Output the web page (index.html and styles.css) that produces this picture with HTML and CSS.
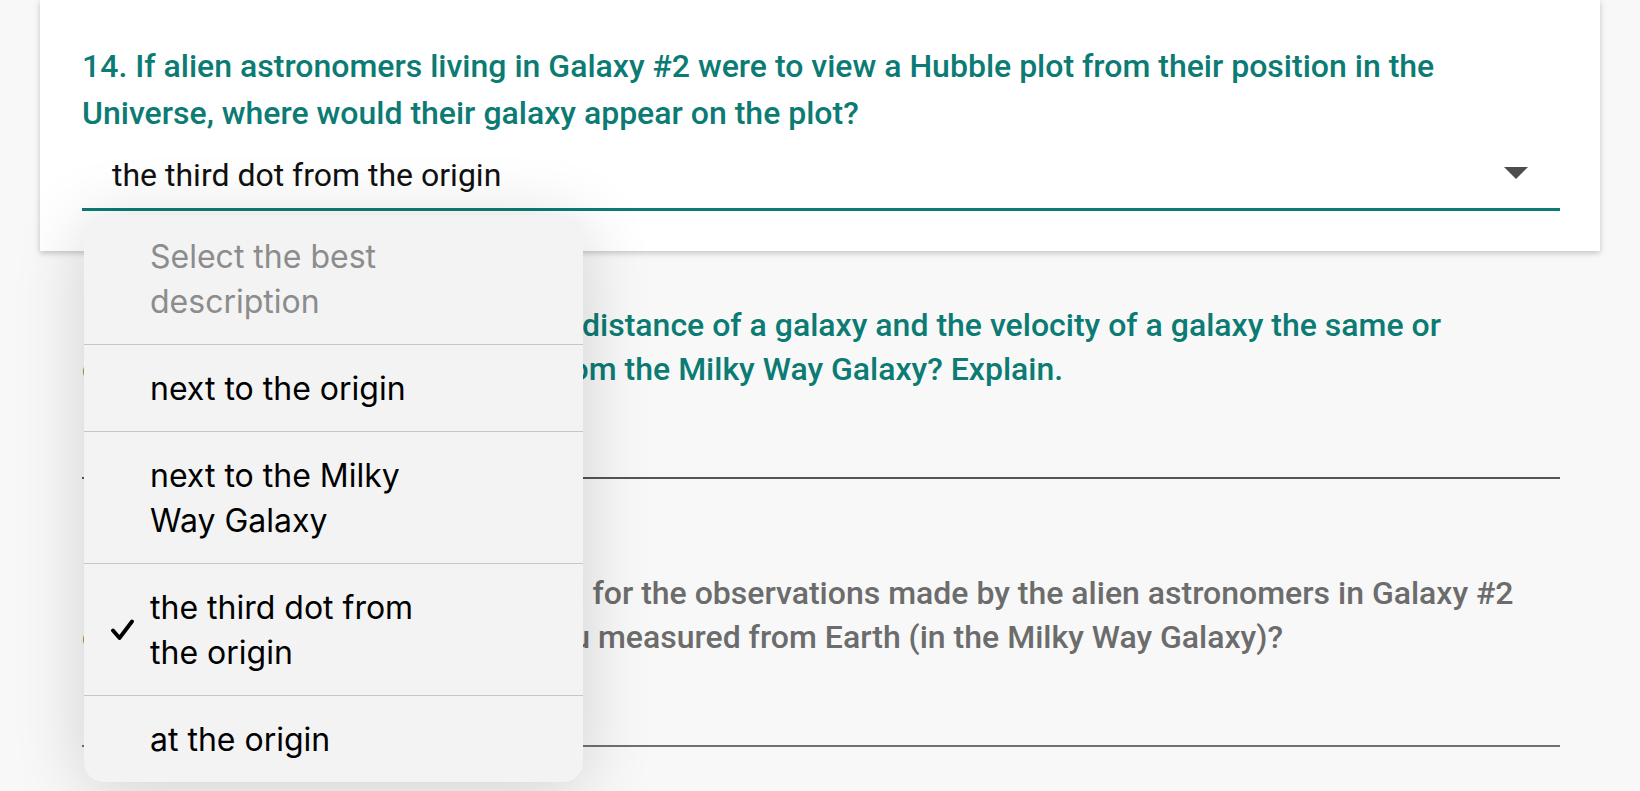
FILE: index.html
```html
<!DOCTYPE html>
<html lang="en">
<head>
<meta charset="utf-8">
<title>Hubble plot questions</title>
<link rel="stylesheet" href="styles.css">
</head>
<body>
<div class="page">
  <section class="card">
    <h2 class="q q-active">14. If alien astronomers living in Galaxy #2 were to view a Hubble plot from their position in the Universe, where would their galaxy appear on the plot?</h2>
    <div class="select">
      <span class="select-value">the third dot from the origin</span>
      <svg class="select-arrow" width="24" height="12" viewBox="0 0 24 12"><polygon points="0,0 24,0 12,12" fill="#4d4d4f"/></svg>
    </div>
  </section>

  <div class="questions">
    <section class="question">
      <p class="q q-active q-small">15. Is the relationship between the distance of a galaxy and the velocity of a galaxy the same or different for Galaxy #2, than it is from the Milky Way Galaxy? Explain.</p>
      <div class="answer-line"></div>
    </section>
    <section class="question question-muted">
      <p class="q q-muted q-small">16. Would a Hubble constant found for the observations made by the alien astronomers in Galaxy #2 differ from the constants which you measured from Earth (in the Milky Way Galaxy)?</p>
      <div class="answer-line answer-line-muted"></div>
    </section>
  </div>

  <div class="menu">
    <div class="option option-first option-placeholder"><span class="check"></span><span class="label">Select the best description</span></div>
    <div class="option"><span class="check"></span><span class="label">next to the origin</span></div>
    <div class="option"><span class="check"></span><span class="label">next to the Milky Way Galaxy</span></div>
    <div class="option option-selected"><span class="check"><svg width="24" height="24" viewBox="0 0 24 24"><polyline points="3,12.5 9.5,20 22,3.5" fill="none" stroke="#000" stroke-width="3.8" stroke-linecap="round" stroke-linejoin="round"/></svg></span><span class="label">the third dot from the origin</span></div>
    <div class="option option-last"><span class="check"></span><span class="label">at the origin</span></div>
  </div>
</div>
</body>
</html>
```

FILE: styles.css
```css
html, body {
  margin: 0;
  padding: 0;
}

body {
  background: #f8f8f8;
  font-family: Roboto, "Liberation Sans", sans-serif;
  overflow: hidden;
}

.page {
  position: relative;
  width: 1640px;
  height: 791px;
}

.card {
  margin: 0 40px;
  padding: 43px 40px 40px 42px;
  background: #ffffff;
  box-shadow: 0 2px 6px rgba(0, 0, 0, 0.22);
}

.q {
  margin: 0;
  font-weight: 500;
  font-size: 32px;
  line-height: 47px;
}

.q-small {
  line-height: 44px;
}

.q-active {
  color: #0b7b74;
}

.q-muted {
  color: #6c6c6c;
}

.select {
  display: flex;
  align-items: center;
  justify-content: space-between;
  height: 66px;
  padding: 5px 32px 0 30px;
  border-bottom: 3px solid #0b7b74;
}

.select-value {
  font-size: 32px;
  color: #111;
}

.select-arrow {
  display: block;
  margin-top: -5px;
}

.questions {
  padding: 0 80px 0 82px;
}

.question {
  margin-top: 52px;
}

.question-muted {
  margin-top: 92px;
}

.answer-line {
  margin-top: 86px;
  height: 2px;
  background: #555555;
}

.answer-line-muted {
  background: #707070;
}

.menu {
  position: absolute;
  left: 84px;
  top: 215px;
  width: 499px;
  border-radius: 20px;
  background: #f3f3f3;
  box-shadow: 0 8px 70px rgba(0, 0, 0, 0.16);
  overflow: hidden;
  font-family: Inter, "Noto Sans", sans-serif;
  font-size: 32px;
  line-height: 45px;
  color: #000;
}

.option {
  display: grid;
  grid-template-columns: 66px 1fr;
  align-items: center;
  padding: 21px 143px 20px 0;
  border-bottom: 1px solid #c6c6c6;
}

.option-first {
  padding-top: 19px;
}

.option-last {
  border-bottom: none;
}

.option-placeholder {
  color: #8c8c8c;
}

.check {
  display: flex;
  padding-left: 26px;
}

.check svg {
  display: block;
}
```
